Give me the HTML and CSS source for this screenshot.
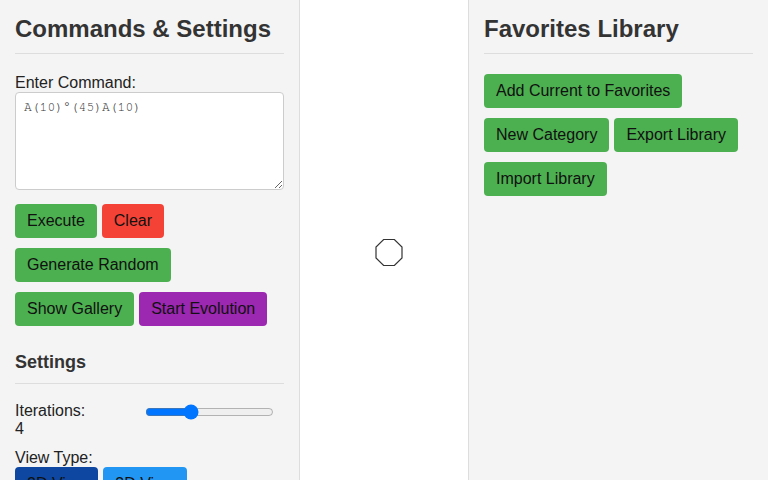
FILE: index.html
```html
<!DOCTYPE html>
<html>
<head>
<meta charset="utf-8">
<link rel="stylesheet" href="styles.css">
</head>
<body>
<div class="app">
  <aside class="panel left">
    <h2>Commands &amp; Settings</h2>
    <label class="field-label" for="cmd">Enter Command:</label>
    <textarea id="cmd" class="cmd">A(10)°(45)A(10)</textarea>
    <div class="btn-row">
      <button class="btn green">Execute</button>
      <button class="btn red">Clear</button>
    </div>
    <div class="btn-row">
      <button class="btn green">Generate Random</button>
    </div>
    <div class="btn-row">
      <button class="btn green">Show Gallery</button>
      <button class="btn purple">Start Evolution</button>
    </div>
    <h3>Settings</h3>
    <div class="setting">
      <label class="setting-label">Iterations: 4</label>
      <input class="slider" type="range" min="1" max="10" value="4">
    </div>
    <div class="view-type">
      <div class="field-label">View Type:</div>
      <div class="btn-row tight">
        <button class="btn dark-blue">2D View</button>
        <button class="btn blue">3D View</button>
      </div>
    </div>
  </aside>
  <main class="canvas">
    <svg class="drawing" width="168" height="480" viewBox="0 0 168 480">
      <polygon points="83.6,239.5 94.4,239.5 102,247.1 102,257.9 94.4,265.5 83.6,265.5 76,257.9 76,247.1" fill="none" stroke="#333" stroke-width="1.2"/>
    </svg>
  </main>
  <aside class="panel right">
    <h2>Favorites Library</h2>
    <div class="fav-buttons">
      <div class="btn-row">
        <button class="btn green">Add Current to Favorites</button>
      </div>
      <div class="btn-row">
        <button class="btn green">New Category</button>
        <button class="btn green">Export Library</button>
      </div>
      <div class="btn-row">
        <button class="btn green">Import Library</button>
      </div>
    </div>
  </aside>
</div>
</body>
</html>
```

FILE: styles.css
```css
html, body {
  margin: 0;
  padding: 0;
  height: 100%;
  overflow: hidden;
}
body {
  font-family: "Liberation Sans", Arial, sans-serif;
  font-size: 16px;
  color: #222;
  background: #fff;
}
.app {
  display: flex;
  height: 480px;
}
.panel {
  width: 300px;
  box-sizing: border-box;
  padding: 15px;
  background: #f4f4f4;
  flex-shrink: 0;
  overflow: hidden;
}
.left {
  border-right: 1px solid #ddd;
}
.right {
  border-left: 1px solid #ddd;
}
.canvas {
  flex: 1;
  background: #fff;
  overflow: hidden;
}
.drawing {
  display: block;
}
h2 {
  margin: 0 0 20px;
  padding-bottom: 10px;
  border-bottom: 1px solid #ddd;
  font-size: 24px;
  font-weight: bold;
  color: #333;
  line-height: 28px;
}
h3 {
  margin: 25px 0 18px;
  padding-bottom: 10px;
  border-bottom: 1px solid #ddd;
  font-size: 18px;
  font-weight: bold;
  color: #333;
  line-height: 22px;
}
.field-label {
  display: block;
  line-height: 18px;
  color: #222;
}
.cmd {
  display: block;
  width: 100%;
  height: 98px;
  box-sizing: border-box;
  margin: 0 0 14px;
  padding: 8px;
  border: 1px solid #ccc;
  border-radius: 4px;
  background: #fff;
  font-family: "FreeMono", "Nimbus Mono PS", "Courier", "Liberation Mono", monospace;
  font-size: 13px;
  color: #333;
  resize: vertical;
}
.btn-row {
  display: flex;
  gap: 5px;
  margin: 5px 0;
}
.btn-row + .btn-row {
  margin-top: 10px;
}
.btn {
  font-family: "Liberation Sans", Arial, sans-serif;
  font-size: 16px;
  line-height: 18px;
  padding: 8px 12px;
  border: none;
  border-radius: 4px;
  color: #111;
  cursor: pointer;
}
.green { background: #4caf50; }
.red { background: #f44336; }
.purple { background: #9c27b0; }
.dark-blue { background: #0d47a1; }
.blue { background: #2196f3; }
.setting {
  display: flex;
  align-items: flex-start;
  margin-bottom: 11px;
}
.setting-label {
  flex-shrink: 0;
  width: 78px;
  margin-right: 50px;
  line-height: 18px;
}
.slider {
  width: 129px;
  margin: 2px;
}
.view-type .btn-row {
  margin-top: 0;
}
.fav-buttons .btn-row:first-child {
  margin-top: 0;
}
```
